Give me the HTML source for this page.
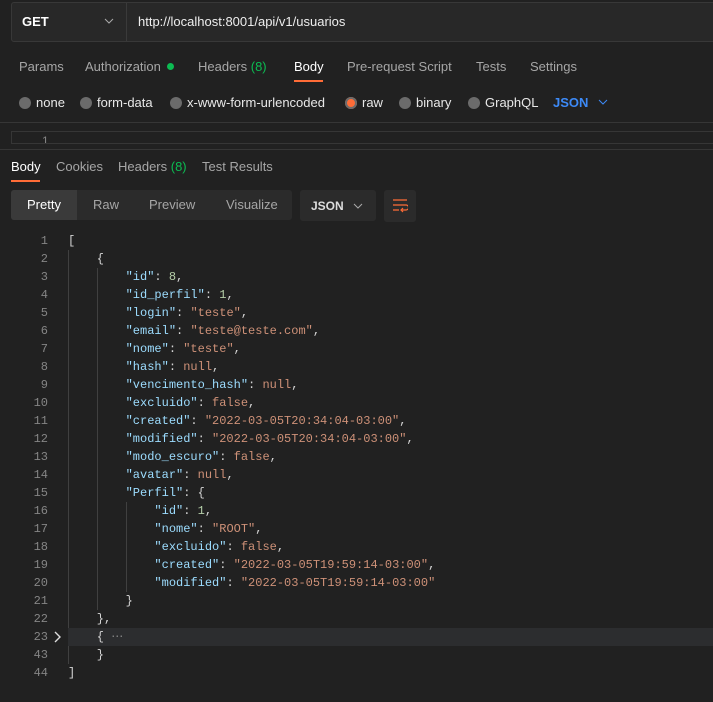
<!DOCTYPE html>
<html><head><style>
*{margin:0;padding:0;box-sizing:border-box}
body{width:713px;height:702px;background:#212121;font-family:"Liberation Sans",sans-serif;color:#a6a6a6;font-size:13px;position:relative;overflow:hidden}
.a{position:absolute;white-space:nowrap}
.dot{display:inline-block;width:12px;height:12px;border-radius:50%;background:#6b6b6b;vertical-align:-2px;margin-right:5px}
.code{position:absolute;left:0;top:232px;font-family:"Liberation Mono",monospace;font-size:12px;width:713px}
.ln{height:18px;line-height:18px;position:relative}
.n{position:absolute;right:665px;color:#858585;text-align:right}
.t{position:absolute;left:68px;color:#d4d4d4;white-space:pre}
.k{color:#9cdcfe}.s{color:#ce9178}.m{color:#b5cea8}.b{color:#ce9178}
</style></head><body>
<div class="a" style="left:11px;top:2px;width:710px;height:40px;background:#282828;border:1px solid #383838;border-radius:3px"></div>
<div class="a" style="left:126px;top:3px;width:1px;height:38px;background:#3a3a3a"></div>
<div class="a" style="left:22px;top:14px;color:#fff;font-weight:bold;font-size:13px">GET</div>
<svg class="a" style="left:104px;top:18px" width="10" height="6"><path d="M1 1l4 4 4-4" stroke="#aaa" fill="none"/></svg>
<div class="a" style="left:138px;top:14px;color:#eee;font-size:13px">http://localhost:8001/api/v1/usuarios</div>

<div class="a" style="left:19px;top:59px">Params</div>
<div class="a" style="left:85px;top:59px">Authorization <span style="display:inline-block;width:7px;height:7px;border-radius:50%;background:#0cbb52;vertical-align:1px;margin-left:2px"></span></div>
<div class="a" style="left:198px;top:59px">Headers <span style="color:#0cbb52">(8)</span></div>
<div class="a" style="left:294px;top:59px;color:#fff">Body</div>
<div class="a" style="left:294px;top:80px;width:29px;height:2px;background:#ff6c37"></div>
<div class="a" style="left:347px;top:59px">Pre-request Script</div>
<div class="a" style="left:476px;top:59px">Tests</div>
<div class="a" style="left:530px;top:59px">Settings</div>

<div class="a" style="left:19px;top:95px;color:#e8e8e8"><span class="dot"></span>none</div>
<div class="a" style="left:80px;top:95px;color:#e8e8e8"><span class="dot"></span>form-data</div>
<div class="a" style="left:170px;top:95px;color:#e8e8e8"><span class="dot"></span>x-www-form-urlencoded</div>
<div class="a" style="left:345px;top:95px;color:#e8e8e8"><span class="dot" style="background:#ff6c37;box-shadow:inset 0 0 0 2px #6b6b6b"></span>raw</div>
<div class="a" style="left:399px;top:95px;color:#e8e8e8"><span class="dot"></span>binary</div>
<div class="a" style="left:468px;top:95px;color:#e8e8e8"><span class="dot"></span>GraphQL</div>
<div class="a" style="left:553px;top:95px;color:#3d8af7;font-weight:bold">JSON</div>
<svg class="a" style="left:598px;top:99px" width="10" height="6"><path d="M1 1l4 4 4-4" stroke="#3d8af7" fill="none"/></svg>

<div class="a" style="left:0;top:122px;width:713px;height:1px;background:#363636"></div>
<div class="a" style="left:11px;top:131px;width:702px;height:13px;border:1px solid #363636;border-right:none;overflow:hidden"><span style="position:absolute;left:30px;top:2px;font-size:12px;color:#858585">1</span></div>
<div class="a" style="left:0;top:149px;width:713px;height:1px;background:#363636"></div>

<div class="a" style="left:11px;top:159px;color:#fff">Body</div>
<div class="a" style="left:11px;top:180px;width:29px;height:2px;background:#ff6c37"></div>
<div class="a" style="left:56px;top:159px">Cookies</div>
<div class="a" style="left:118px;top:159px">Headers <span style="color:#0cbb52">(8)</span></div>
<div class="a" style="left:202px;top:159px">Test Results</div>

<div class="a" style="left:11px;top:190px;width:281px;height:30px;background:#2b2b2b;border-radius:3px"></div>
<div class="a" style="left:11px;top:190px;width:66px;height:30px;background:#3a3a3a;border-radius:3px 0 0 3px"></div>
<div class="a" style="left:27px;top:197px;color:#fff">Pretty</div>
<div class="a" style="left:93px;top:197px">Raw</div>
<div class="a" style="left:149px;top:197px">Preview</div>
<div class="a" style="left:226px;top:197px">Visualize</div>
<div class="a" style="left:300px;top:190px;width:76px;height:31px;background:#2b2b2b;border-radius:3px"></div>
<div class="a" style="left:311px;top:199px;color:#ddd;font-weight:bold;font-size:12px">JSON</div>
<svg class="a" style="left:353px;top:203px" width="10" height="6"><path d="M1 1l4 4 4-4" stroke="#aaa" fill="none"/></svg>
<div class="a" style="left:384px;top:190px;width:32px;height:32px;background:#2b2b2b;border-radius:3px"></div>
<svg class="a" style="left:392px;top:199px" width="16" height="14"><path d="M1 1h14M1 6h13a2.5 2.5 0 010 5h-4M1 11h6M11 9l-2 2 2 2" stroke="#ff6c37" fill="none" stroke-width="1.2"/></svg>

<div class="a" style="left:68px;top:250px;width:1px;height:414px;background:#404040"></div>
<div class="a" style="left:97px;top:268px;width:1px;height:342px;background:#404040"></div>
<div class="a" style="left:126px;top:502px;width:1px;height:90px;background:#404040"></div>
<div class="a" style="left:68px;top:628px;width:645px;height:18px;background:#2c2d2f"></div>
<svg class="a" style="left:54px;top:631px" width="8" height="12"><path d="M1 1l5 5-5 5" stroke="#ddd" fill="none" stroke-width="1.4"/></svg>

<div class="code">
<div class="ln"><span class="n">1</span><span class="t">[</span></div>
<div class="ln"><span class="n">2</span><span class="t">    {</span></div>
<div class="ln"><span class="n">3</span><span class="t">        <span class="k">"id"</span>: <span class="m">8</span>,</span></div>
<div class="ln"><span class="n">4</span><span class="t">        <span class="k">"id_perfil"</span>: <span class="m">1</span>,</span></div>
<div class="ln"><span class="n">5</span><span class="t">        <span class="k">"login"</span>: <span class="s">"teste"</span>,</span></div>
<div class="ln"><span class="n">6</span><span class="t">        <span class="k">"email"</span>: <span class="s">"teste@teste.com"</span>,</span></div>
<div class="ln"><span class="n">7</span><span class="t">        <span class="k">"nome"</span>: <span class="s">"teste"</span>,</span></div>
<div class="ln"><span class="n">8</span><span class="t">        <span class="k">"hash"</span>: <span class="b">null</span>,</span></div>
<div class="ln"><span class="n">9</span><span class="t">        <span class="k">"vencimento_hash"</span>: <span class="b">null</span>,</span></div>
<div class="ln"><span class="n">10</span><span class="t">        <span class="k">"excluido"</span>: <span class="b">false</span>,</span></div>
<div class="ln"><span class="n">11</span><span class="t">        <span class="k">"created"</span>: <span class="s">"2022-03-05T20:34:04-03:00"</span>,</span></div>
<div class="ln"><span class="n">12</span><span class="t">        <span class="k">"modified"</span>: <span class="s">"2022-03-05T20:34:04-03:00"</span>,</span></div>
<div class="ln"><span class="n">13</span><span class="t">        <span class="k">"modo_escuro"</span>: <span class="b">false</span>,</span></div>
<div class="ln"><span class="n">14</span><span class="t">        <span class="k">"avatar"</span>: <span class="b">null</span>,</span></div>
<div class="ln"><span class="n">15</span><span class="t">        <span class="k">"Perfil"</span>: {</span></div>
<div class="ln"><span class="n">16</span><span class="t">            <span class="k">"id"</span>: <span class="m">1</span>,</span></div>
<div class="ln"><span class="n">17</span><span class="t">            <span class="k">"nome"</span>: <span class="s">"ROOT"</span>,</span></div>
<div class="ln"><span class="n">18</span><span class="t">            <span class="k">"excluido"</span>: <span class="b">false</span>,</span></div>
<div class="ln"><span class="n">19</span><span class="t">            <span class="k">"created"</span>: <span class="s">"2022-03-05T19:59:14-03:00"</span>,</span></div>
<div class="ln"><span class="n">20</span><span class="t">            <span class="k">"modified"</span>: <span class="s">"2022-03-05T19:59:14-03:00"</span></span></div>
<div class="ln"><span class="n">21</span><span class="t">        }</span></div>
<div class="ln"><span class="n">22</span><span class="t">    },</span></div>
<div class="ln"><span class="n">23</span><span class="t">    { <span style="color:#888">⋯</span></span></div>
<div class="ln"><span class="n">43</span><span class="t">    }</span></div>
<div class="ln"><span class="n">44</span><span class="t">]</span></div>
</div>
</body></html>
